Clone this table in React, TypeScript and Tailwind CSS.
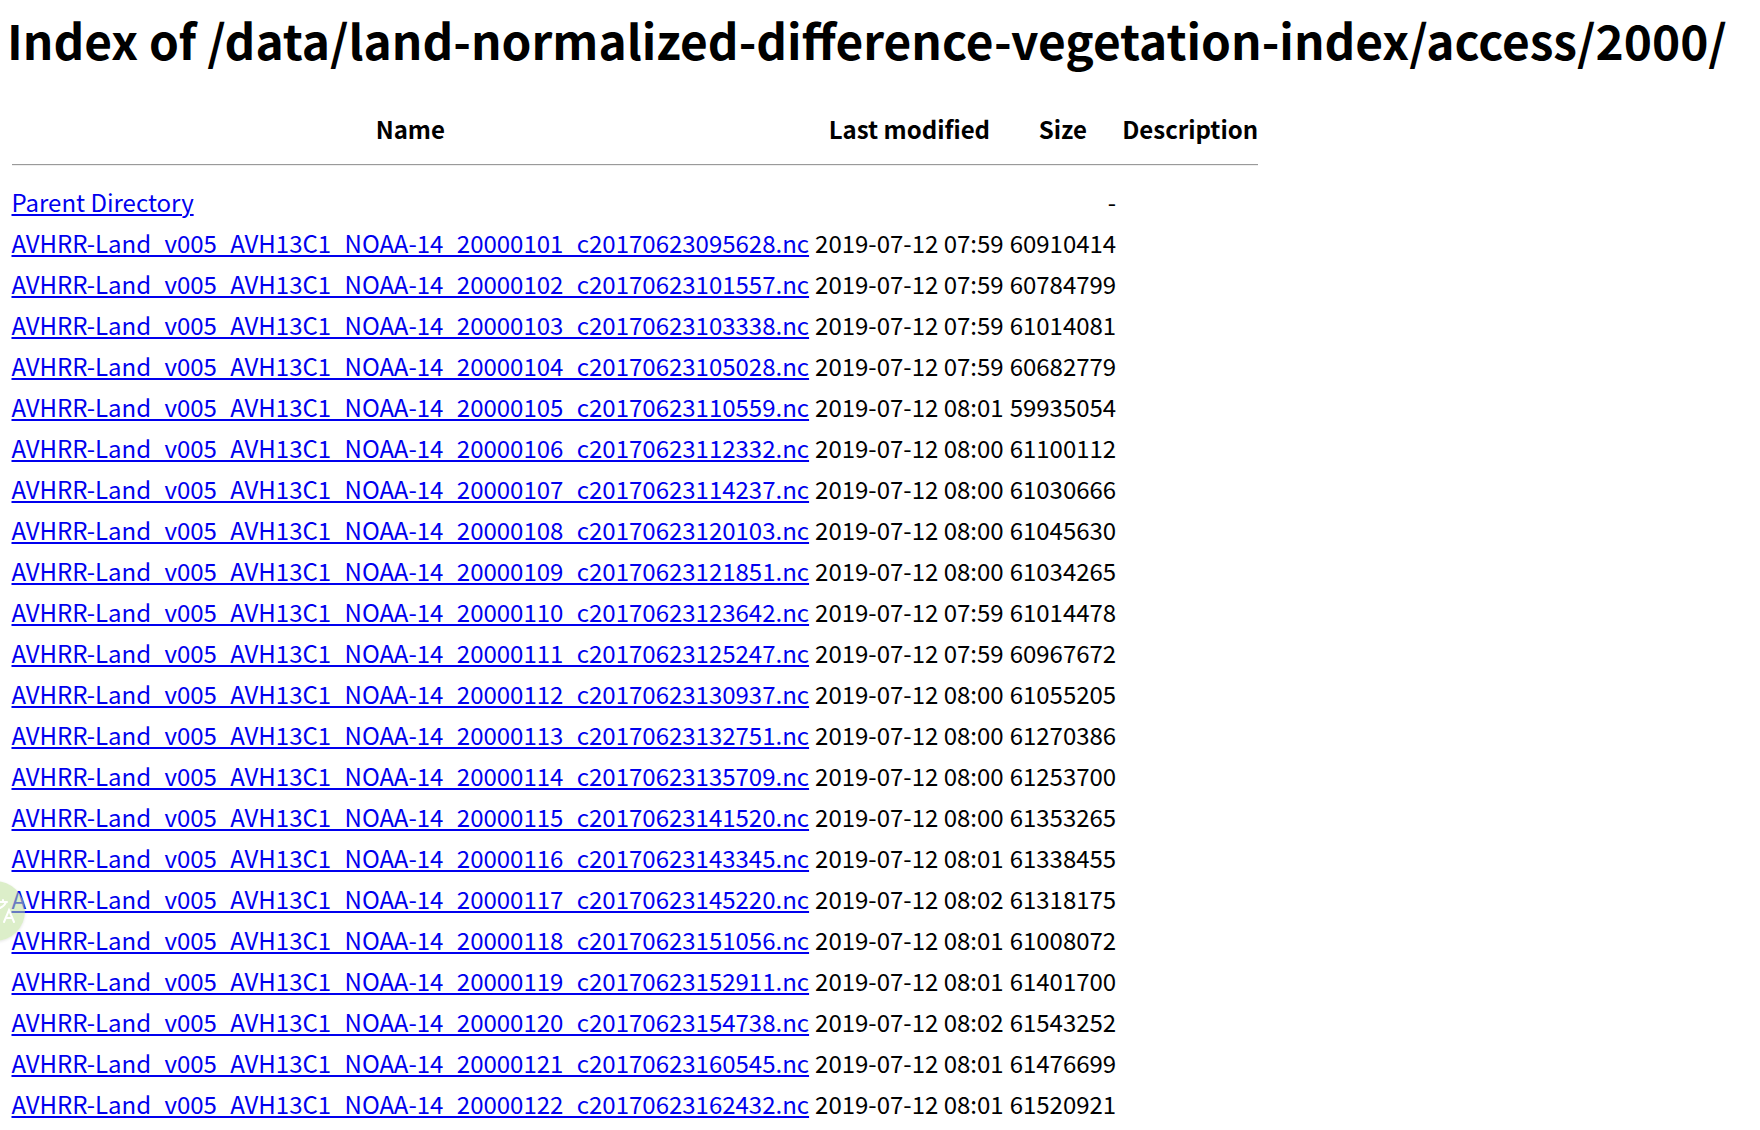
const rows: [string, string, string, string][] = [
  ['20000101', '20170623095628', '07:59', '60910414'],
  ['20000102', '20170623101557', '07:59', '60784799'],
  ['20000103', '20170623103338', '07:59', '61014081'],
  ['20000104', '20170623105028', '07:59', '60682779'],
  ['20000105', '20170623110559', '08:01', '59935054'],
  ['20000106', '20170623112332', '08:00', '61100112'],
  ['20000107', '20170623114237', '08:00', '61030666'],
  ['20000108', '20170623120103', '08:00', '61045630'],
  ['20000109', '20170623121851', '08:00', '61034265'],
  ['20000110', '20170623123642', '07:59', '61014478'],
  ['20000111', '20170623125247', '07:59', '60967672'],
  ['20000112', '20170623130937', '08:00', '61055205'],
  ['20000113', '20170623132751', '08:00', '61270386'],
  ['20000114', '20170623135709', '08:00', '61253700'],
  ['20000115', '20170623141520', '08:00', '61353265'],
  ['20000116', '20170623143345', '08:01', '61338455'],
  ['20000117', '20170623145220', '08:02', '61318175'],
  ['20000118', '20170623151056', '08:01', '61008072'],
  ['20000119', '20170623152911', '08:01', '61401700'],
  ['20000120', '20170623154738', '08:02', '61543252'],
  ['20000121', '20170623160545', '08:01', '61476699'],
  ['20000122', '20170623162432', '08:01', '61520921'],
]

const cell = 'px-[1.5px] py-[1.5px] leading-[35px] align-middle'

export default function App() {
  return (
    <div
      className="relative min-h-screen bg-white px-[7px] text-black"
      style={{ fontFamily: '"Noto Sans CJK JP", "Noto Sans", sans-serif' }}
    >
      <h1 className="mt-[4.5px] mb-[32px] text-[47.8px] font-bold leading-[69.5px]">
        Index of /data/land-normalized-difference-vegetation-index/access/2000/
      </h1>

      <table className="border-separate border-spacing-[3px] text-[24px]">
        <thead>
          <tr>
            <th className={`${cell} font-bold`}>Name</th>
            <th className={`${cell} font-bold`}>Last modified</th>
            <th className={`${cell} font-bold`}>Size</th>
            <th className={`${cell} font-bold`}>Description</th>
          </tr>
          <tr>
            <th colSpan={4} className="px-[1.5px] py-[1.5px]">
              <hr className="my-[12px] h-0 border-t border-b border-t-[#9a9a9a] border-b-[#eeeeee]" />
            </th>
          </tr>
        </thead>
        <tbody>
          <tr>
            <td className={`${cell} text-left`}>
              <a href="#" className="text-[#0000ee] underline">
                Parent Directory
              </a>
            </td>
            <td className={`${cell} text-right`}>&nbsp;</td>
            <td className={`${cell} text-right`}>-</td>
            <td className={cell}>&nbsp;</td>
          </tr>
          {rows.map(([day, created, time, size]) => {
            const name = `AVHRR-Land_v005_AVH13C1_NOAA-14_${day}_c${created}.nc`
            return (
              <tr key={day}>
                <td className={`${cell} text-left whitespace-nowrap`}>
                  <a href="#" className="text-[#0000ee] underline">
                    {name}
                  </a>
                </td>
                <td className={`${cell} text-right whitespace-nowrap`}>2019-07-12 {time}</td>
                <td className={`${cell} text-right`}>{size}</td>
                <td className={cell}>&nbsp;</td>
              </tr>
            )
          })}
        </tbody>
      </table>

      {/* browser translate bubble, half off the left edge */}
      <div className="absolute left-[-35px] top-[876px] flex h-[60px] w-[60px] items-center justify-end rounded-full bg-[#bfe09c]/55 pr-[6px] shadow-[0_1px_3px_rgba(0,0,0,0.10)]">
        <svg width="22" height="26" viewBox="0 0 22 26" fill="none" stroke="white" strokeWidth="2" strokeLinecap="round">
          <path d="M2 4h8M6 2v2M3 10c2-1 5-3 6-6" />
          <path d="M7 24l5-12 5 12M9 20h6" />
        </svg>
      </div>
    </div>
  )
}
